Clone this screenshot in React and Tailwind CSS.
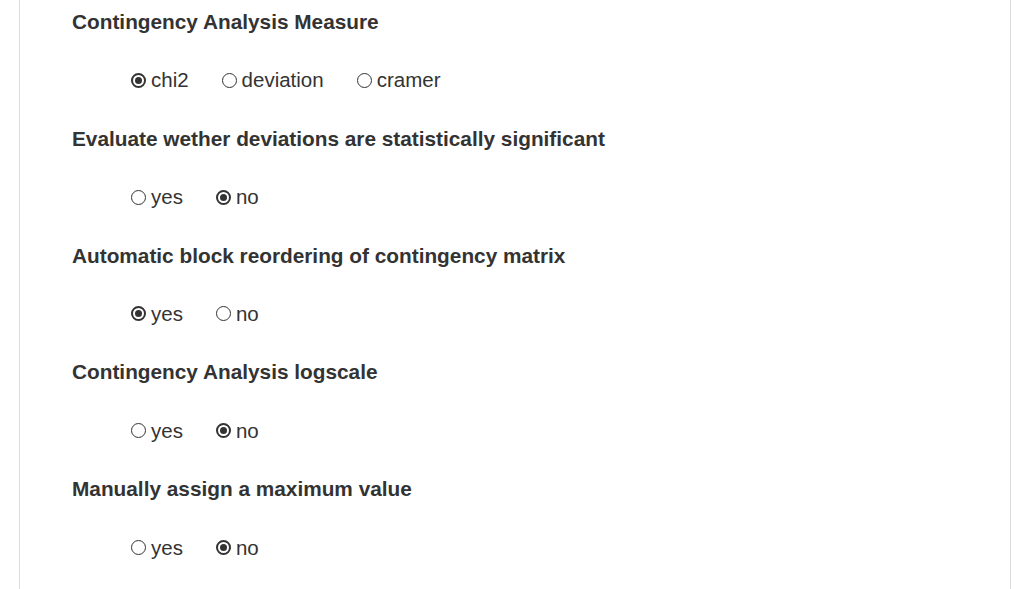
import React from "react";

const sections = [
	{ title: "Contingency Analysis Measure", options: ["chi2", "deviation", "cramer"], selected: "chi2" },
	{ title: "Evaluate wether deviations are statistically significant", options: ["yes", "no"], selected: "no" },
	{ title: "Automatic block reordering of contingency matrix", options: ["yes", "no"], selected: "yes" },
	{ title: "Contingency Analysis logscale", options: ["yes", "no"], selected: "no" },
	{ title: "Manually assign a maximum value", options: ["yes", "no"], selected: "no" },
];

function Radio({ label, checked }) {
	return (
		<label className="flex items-center gap-[5px]">
			{checked ? (
				<span className="flex items-center justify-center w-[15px] h-[15px] rounded-full border-2 border-[#333]">
					<span className="w-[7px] h-[7px] rounded-full bg-[#333]" />
				</span>
			) : (
				<span className="w-[15px] h-[15px] rounded-full border-[1.5px] border-[#333]" />
			)}
			<span>{label}</span>
		</label>
	);
}

export default function App() {
	return (
		<div className="bg-white h-[589px] overflow-hidden" style={{ fontFamily: '"Liberation Sans", Arial, sans-serif' }}>
			<div className="ml-[19px] w-[992px] h-[589px] border-x border-[#dcdcdc] pl-[52px] pt-[10px] text-[#333] text-[20.5px]">
				<div className="flex flex-col gap-[34.4px]">
					{sections.map((s) => (
						<React.Fragment key={s.title}>
							<div className="font-bold text-[20.8px] leading-[24px]">{s.title}</div>
							<div className="flex items-center gap-[33px] pl-[59px] leading-[24px]">
								{s.options.map((o) => (
									<Radio key={o} label={o} checked={o === s.selected} />
								))}
							</div>
						</React.Fragment>
					))}
				</div>
			</div>
		</div>
	);
}
